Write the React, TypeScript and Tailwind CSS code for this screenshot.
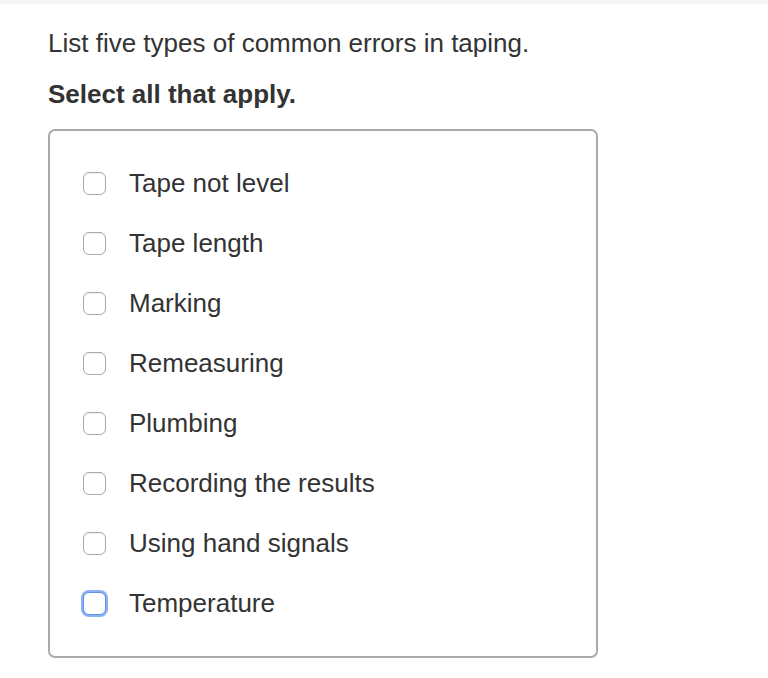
const options = [
  "Tape not level",
  "Tape length",
  "Marking",
  "Remeasuring",
  "Plumbing",
  "Recording the results",
  "Using hand signals",
  "Temperature",
];

export default function App() {
  return (
    <div className="min-h-[678px] bg-white font-['Liberation_Sans',Arial,sans-serif] text-[#333]">
      <div className="h-[4px] bg-[#f6f6f6]" />
      <div className="pl-[48px] pt-[23px]">
        <p className="text-[26px] leading-[33px]">List five types of common errors in taping.</p>
        <p className="mt-[18px] text-[26px] font-bold leading-[33px]">Select all that apply.</p>
        <div className="mt-[18px] w-[550px] rounded-[7px] border-2 border-[#aaa] pl-[33px] pt-[22px] pb-[23px]">
          {options.map((label, i) => {
            const focused = i === options.length - 1;
            return (
              <label key={label} className="flex h-[60px] items-center gap-[23px]">
                <input
                  type="checkbox"
                  className={
                    focused
                      ? "m-0 h-[23px] w-[23px] appearance-none rounded-[6px] border border-[#5f8fe6] bg-white shadow-[0_0_0_2px_#8db2f3]"
                      : "m-0 h-[23px] w-[23px] appearance-none rounded-[6px] border border-[#a9a9a9] bg-white shadow-[inset_0_1px_1px_rgba(0,0,0,0.06)]"
                  }
                />
                <span className="text-[26px] leading-[33px]">{label}</span>
              </label>
            );
          })}
        </div>
      </div>
    </div>
  );
}
